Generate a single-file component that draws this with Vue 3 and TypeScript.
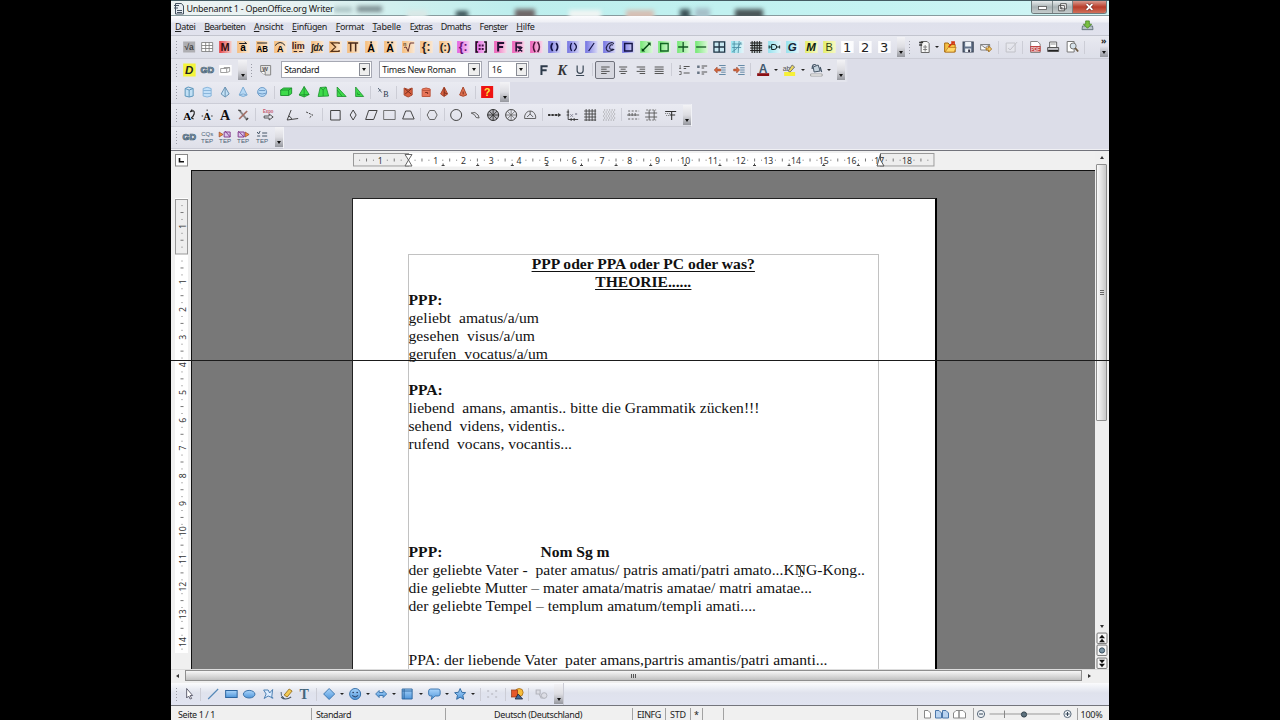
<script setup lang="ts">
import type { Directive } from 'vue'

// Spreads a label over the given number of pixels by adjusting its tracking.
const vFit: Directive<HTMLElement, number> = {
  mounted(el, { value }) {
    const natural = el.getBoundingClientRect().width
    const count = (el.textContent ?? '').length
    if (count > 0) el.style.letterSpacing = `${(value - natural) / count}px`
  },
}

const stroke = (d: string, c = '#333', w = 1, fill = 'none') =>
  `<path d="${d}" fill="${fill}" stroke="${c}" stroke-width="${w}"/>`
const glyph = (t: string, c = '#111', size = 12, extra = '') =>
  `<text x="8" y="${8 + size * 0.36}" font-size="${size}" text-anchor="middle" fill="${c}" ${extra}>${t}</text>`
const tile = (grad: string, body: string) =>
  `<rect x="2" y="2" width="12.5" height="12" fill="url(#${grad})"/>${body}`
const bold = 'font-weight="bold"'
const solid3d = (c: string, fill: string): Record<string, string> => ({
  box: stroke('M2.5 6L5.5 4H13.5V9.500L10.500 11.500H2.500Z M2.500 6H10.500V11.500 M10.500 6L13.500 4', c, 0.9, fill),
  pyramid: stroke('M8 2.500L3 11L8 13L13 10.500Z M8 2.500V13 M3 11L13 10.500', c, 0.8, fill),
  prism: stroke('M5 3.500L11 3L13.500 12L3 12.500Z M8 6L5 3.500 M8 6V12 M8 6L11 3', c, 0.8, fill),
  wedge: stroke('M4 3V12.500H13Z M4 6L9 12.500', c, 0.8, fill),
  wedge2: stroke('M4.500 3V12.500H12.500Z M6.500 8.500V10.500H9', c, 0.8, fill),
})
const g3 = solid3d('#1a8f2c', '#3edb4b')

const icons: Record<string, string> = {
  sqa: `<rect x="2" y="2.500" width="12" height="11" fill="#aeaeb2"/>` + glyph('√a', '#444', 8.5, bold),
  grid: stroke('M2.500 3.500H13.500V12.500H2.500ZM2.500 6.500H13.500M2.500 9.500H13.500M6.500 3.500V12.500M10 3.500V12.500', '#777', 0.8, '#fff'),
  M: tile('red', glyph('M', '#311', 11, bold)),
  vec: tile('org', `<text x="8" y="12.300" font-size="10" text-anchor="middle" font-weight="bold">a</text>` + stroke('M4 4.500H11.500L9.500 3', '#222')),
  ab: tile('org', `<text x="8" y="12.500" font-size="9.500" text-anchor="middle" textLength="11.500" lengthAdjust="spacingAndGlyphs" font-weight="bold">AB</text>` + stroke('M3 4H13', '#222')),
  hat: tile('org', `<text x="8" y="13" font-size="9" text-anchor="middle" font-weight="bold">A</text>` + stroke('M3 6.500Q8 .5 13 6.500', '#222')),
  lim: tile('org', `<text x="8" y="9.500" font-size="9" text-anchor="middle" font-weight="bold" fill="#422">lim</text>` + stroke('M3.500 12.500H7M9 12.500H12.500', '#322')),
  int: tile('org', glyph('∫dx', '#222', 10, 'font-style="italic" font-weight="bold" textLength="12" lengthAdjust="spacingAndGlyphs"')),
  sum: tile('org', stroke('M12 5V3.800H4L8.500 8L4 12.300H12V11', '#5a3418', 1.2)),
  prod: tile('org', stroke('M3 4H13M5.500 4V12.500M10.500 4V12.500', '#4a2a18', 1.5)),
  A1: tile('org', `<text x="8" y="13" font-size="10.500" text-anchor="middle" font-weight="bold">A</text>` + stroke('M8 2.500V4.500', '#222', 1.7)),
  A2: tile('org', `<text x="8" y="13" font-size="10.500" text-anchor="middle" font-weight="bold">A</text>` + stroke('M5 3.500H7M9 3.500H11', '#222', 1.6)),
  root: tile('org', stroke('M4 8.500L6 8L8 12.500L10 4H14', '#633') + `<text x="3" y="7" font-size="5.500">n</text>`),
  br1: tile('org', glyph('{:', '#222', 12, bold)),
  br2: tile('org', glyph('(:)', '#222', 11, bold)),
  br3: tile('mag', glyph('{:', '#617', 12, bold)),
  br4: tile('mag', stroke('M5 3H3V13H5M11 3H13V13H11', '#111', 1.5) + '<path d="M5.500 5.500h2v2h-2zM8.500 5.500h2v2h-2zM5.500 9h2v2h-2zM8.500 9h2v2h-2z" fill="#414"/>'),
  F1: tile('pnk', stroke('M12 4H6V12.500M6 8H11', '#213', 2)),
  F2: tile('pnk', stroke('M12 4H6V12.500M6 8H11M8 8L12 12.500M12 8L8 12.500', '#213', 1.6)),
  p1: tile('pnk', stroke('M7 3Q3.500 8 7 13M9.500 3Q13 8 9.500 13', '#4a1438', 1.5)),
  p2: tile('blu', stroke('M6.500 4Q3.500 8 6.500 12M10 4Q13 8 10 12', '#114', 1.7)),
  p3: tile('blu', stroke('M6.500 4Q4 8 6.500 12M9 4Q13.500 8 9 12', '#114', 1.3)),
  sl: tile('blu', stroke('M5.500 12L11 4', '#114', 1.2)),
  cc: tile('blu', stroke('M12.500 5Q12 3 9 4T5 9Q5.500 13 9 12T13 10M12 6Q9 5 8.500 8T12 10', '#224', 1.1)),
  sq: tile('blu', stroke('M4.500 4.500H12V12H4.500Z', '#114', 1.4)),
  gd: tile('grn', stroke('M4.500 11.500L11.500 4.500', '#041', 1.4) + '<path d="M12.500 3.500V7L9 3.500ZM3.500 12.500V9L7 12.500Z" fill="#041"/>'),
  gs: tile('grn', stroke('M4.500 4.500H12V12H4.500Z', '#162', 1.3)),
  gp: tile('grn', stroke('M3 8H13M8 3V13', '#152', 1.3)),
  gm: tile('grn', stroke('M3 8H13', '#152', 1.3)),
  tb: '<rect x="2" y="2" width="12.500" height="12" fill="#c8e8f2"/>' + stroke('M2.800 2.800H13.500V13.200H2.800ZM8 3V13.500M3 8H13.500', '#234', 1.3),
  cv: tile('cyn', stroke('M3 5H13M3 8.500H12M5 2V14M10 2L9 14M3 13Q9 10 12 3', '#468aa0', 0.8)),
  gg: `<rect x="3" y="3" width="11" height="11" fill="#b9c4c6"/>` + stroke('M2 4H14M2 6.500H14M2 9H14M2 11.500H14M4 2V14M6.500 2V14M9 2V14M11.500 2V14', '#222', 1),
  dd: tile('cyn', stroke('M3.500 8H5.500M10.500 8H13M3 6.500V9.500M13.500 6.500V9.500M5.500 5.500V10.500H8Q10.500 10.500 10.500 8T8 5.500Z', '#122', 1)),
  G: tile('cyn', glyph('G', '#123', 11.5, bold + ' font-style="italic"')),
  My: tile('yel', glyph('M', '#121', 11.5, bold + ' font-style="italic"')),
  By: tile('yel', glyph('B', '#341', 11)),
  n1: tile('wht', glyph('1', '#222', 13, 'font-family="DejaVu Sans"')),
  n2: tile('wht', glyph('2', '#222', 13, 'font-family="DejaVu Sans"')),
  n3: tile('wht', glyph('3', '#222', 13, 'font-family="DejaVu Sans"')),
  doc: stroke('M5 2.500H11L13 4.500V13.500H5Z', '#666', 1, '#f7f7f7') + stroke('M3 3.500H7M3 6H6', '#333', 1.5) + stroke('M7 8H11M7 10.500H11M9 6V12.500', '#777', 0.9),
  open: stroke('M2.500 13V4H6L7 5.500H13V13Z', '#a66a12', 1, '#f5bf43') + stroke('M6.500 8L11.500 3M9 3H12V6', '#d33512', 1.5) + stroke('M3 13L6 8.500H14L12 13Z', '#b9791b', 0.7, '#ffd86b'),
  save: stroke('M3 3H13V13H3Z', '#3a4556', 1.2, '#64748c') + '<path d="M5 3H11V7.500H5ZM5 9.500H11V13H5Z" fill="#eef2f7"/><rect x="8" y="10.500" width="2" height="2.500" fill="#334"/>',
  mail: stroke('M2.500 5.500H11.500V11H2.500ZM2.500 5.500L7 9L11.500 5.500', '#777', 0.9, '#fff') + stroke('M8 9H10.500V7L13.500 10L10.500 13V11H8Z', '#9a6412', 0.8, '#f6cd6a'),
  edit: `<g opacity=".35">` + stroke('M3 4H12V13H3ZM5 9L7 11L14 3', '#888', 1, '#eee') + '</g>',
  pdf: stroke('M3.500 2.500H10.500L13 5V13.500H3.500Z', '#888', 1, '#fff') + '<rect x="3" y="7" width="10.500" height="5.500" fill="#c04444"/><text x="8.300" y="11.500" font-size="4.500" fill="#fff" text-anchor="middle">PDF</text>',
  print: stroke('M4.500 8V3H11.500V8', '#666', 1, '#fff') + stroke('M5.500 5H10.500', '#777', 0.8) + stroke('M2.500 8.500H13.500V12.500H2.500Z', '#555', 1, '#c5c5ca') + stroke('M3 11.500H13', '#222', 1.2),
  look: stroke('M3 2.500H10V13H3Z', '#777', 1, '#fff') + '<circle cx="9" cy="7" r="3" fill="#d7e3ec" stroke="#777"/>' + stroke('M11 9L14 12.500', '#6b5a40', 1.8),
  D: `<rect x="2" y="1.500" width="12.500" height="13" fill="#f4f43c"/>` + glyph('D', '#222', 11.500, 'font-style="italic" font-weight="bold"'),
  GD: `<text x="8" y="11.200" font-size="9" text-anchor="middle" font-weight="bold" fill="#9fb4c2" stroke="#3d5a70" stroke-width=".7">GD</text>`,
  box0: '<rect x="2" y="3" width="12.500" height="10.500" fill="#fff"/>' + stroke('M3.500 6.500H9.500V10.500H3.500ZM9.500 6.500L12.500 5.500V9.500L9.500 10.500M7 6.500V5.500H12.500', '#888', 0.8),
  para: stroke('M3.500 3.500H13.500V13H8L3.500 9.500Z', '#888', 1, '#e4e4e4') + stroke('M3.500 9.500H8V13', '#777', 0.9, '#fff') + `<text x="5" y="8.500" font-size="6" font-weight="bold" fill="#555">W</text>`,
  F: stroke('M5.300 13V4.200H11.500M5.300 8.300H10.500', '#2c3a4a', 2),
  K: glyph('K', '#333', 14, 'font-style="italic" font-weight="bold" font-family="Liberation Serif"'),
  U: stroke('M5 3.500V8.500Q5 11.300 8 11.300T11 8.500V3.500', '#3b4856', 1.2) + stroke('M4 13.500H12', '#3b4856'),
  al: stroke('M4 5H12.500M4 7.200H9.500M4 9.400H12.500M4 11.500H9.500', '#555'),
  ac: stroke('M4 5H12M5.500 7.200H10.500M4 9.400H12M5.500 11.500H10.500', '#555'),
  ar: stroke('M3.500 5H12M6.500 7.200H12M3.500 9.400H12M6.500 11.500H12', '#555'),
  aj: stroke('M3.500 5H12.500M3.500 7.200H12.500M3.500 9.400H12.500M3.500 11.500H12.500', '#555'),
  ol: stroke('M7.500 4.500H13.500M7.500 6.500H10M7.500 11H13.500', '#555') + stroke('M4 3V6.500M3 6.500H5M3 9.500H5V12.500H3', '#555', 0.8),
  ul: stroke('M7.500 4H13M7.500 6H10M7.500 10H13M7.500 12H10', '#555') + '<path d="M3 3.500H5.500V6H3ZM3 9.500H5.500V12H3Z" fill="#667382"/>',
  out: stroke('M7 3.500H13.500M9 5.800H13.500M9 8H13.500M9 10.200H13.500M7 12.500H13.500', '#57809f', 0.9) + '<path d="M2 8L5 5V7H8.500V9H5V11Z" fill="#d0663e" stroke="#963f22" stroke-width=".5"/>',
  ind: stroke('M7 3.500H13.500M9 5.800H13.500M9 8H13.500M9 10.200H13.500M7 12.500H13.500', '#57809f', 0.9) + '<path d="M8.500 8L5.500 5V7H2.500V9H5.500V11Z" fill="#d0663e" stroke="#963f22" stroke-width=".5"/>',
  fc: `<text x="8" y="10.800" text-anchor="middle" font-size="12" font-weight="bold" fill="#3f586e">A</text><rect x="2" y="11.200" width="12" height="2.800" fill="#8a1015"/>`,
  hl: '<rect x="3" y="10" width="11" height="4" fill="#f6ef37"/>' + `<text x="1.500" y="8.500" font-size="7" fill="#555">ab</text>` + stroke('M7 9L11 3L13.500 5L9 10Z', '#777', 1, '#ead65b'),
  bk: stroke('M5 5L10 3L12 9L6 10Z', '#456', 1, '#c5d2dd') + stroke('M4 7Q4 1 8 3M12 5L13.500 10', '#456', 1.2) + '<path d="M2.500 12H14V14H2.500Z" fill="#fff" stroke="#777" stroke-width=".6"/>',
  b1: stroke('M4 4.500L8 6L12 4.500V12L8 13L4 12ZM8 6V13M4 4.500L7 3L12 4.500', '#5e97bd', 1, '#c2e0f5'),
  b2: stroke('M4 4.500Q8 2 12 4.500V12Q8 14 4 12ZM4 6.500H12M4 9.500H12', '#8ab6db', 1, '#c2e0f9'),
  b3: stroke('M8 3L4 10L8 13L12 10ZM8 3V13', '#6c94b4', 1, '#c5e1f5'),
  b4: stroke('M8 3L4 11Q8 14 12 11ZM4 11Q8 9 12 11', '#7fadd4', 1, '#b6d8f5'),
  b5: '<circle cx="8" cy="8" r="4.500" fill="#b6d8f5" stroke="#6f9dc9"/>' + stroke('M3.500 9Q8 11 12.500 9M5 6.500H11', '#6f9dc9'),
  c1: g3.box, c2: g3.pyramid, c3: g3.prism, c4: g3.wedge, c5: g3.wedge2,
  AB: `<text x="8" y="12.500" font-size="8" font-family="Liberation Serif" fill="#234">B</text>` + stroke('M3 4L6.500 8.500M3.500 7.500L5.500 5.500', '#456', 0.9),
  r1: stroke('M4 4L8 5.500L12 4V11L8 13L4 11Z', '#a9482e', 1, '#d8603f') + stroke('M5 5L11 10M11 5L5 10', '#7a2d1c'),
  r2: stroke('M4 5Q8 3 12 5V12.500H4ZM4 6.500H12', '#bd5840', 1, '#e8765a') + stroke('M7 8.500H9.500V10', '#7b2d1c'),
  r3: stroke('M8 3L4.500 10L8 12.500L11.500 10Z', '#a9482e', 1, '#d8603f') + stroke('M8 4V12M8 8.500L11 10', '#7a2d1c'),
  r4: stroke('M8 3L4.500 11Q8 13.500 11.500 11Z', '#a9482e', 1, '#e0704f') + stroke('M8 7.500V10.500', '#7a2d1c'),
  help: '<rect x="2" y="2" width="12" height="12" fill="#ee1212"/>' + glyph('?', '#ffe53d', 10.500, bold),
  t1: `<text x="2" y="12.500" font-size="11" font-family="Liberation Serif" font-weight="bold">A</text>` + stroke('M9 5Q14 2 13 7Q12 10 10 11M10 11L12.500 12M9 5L11 2.500', '#222', 1.2),
  t2: `<text x="8" y="12.500" font-size="10.500" text-anchor="middle" font-family="Liberation Serif" font-weight="bold">A</text>` + stroke('M2.500 9H4M12 9H13.500M8 2.500V4', '#333'),
  t3: glyph('A', '#111', 14, bold + ' font-family="Liberation Serif"'),
  t4: stroke('M4 3L12 13', '#888', 2) + stroke('M12 4L4 12', '#a36c62', 1.700) + stroke('M3 3L6 4M11 13L13 11', '#444', 1.2),
  exp: `<text x="8" y="6" text-anchor="middle" font-size="5.500" font-weight="bold" fill="#c4566a" textLength="10.500" lengthAdjust="spacingAndGlyphs">Expo</text>` + stroke('M4 9H9V7L13 10L9 13V11H4Z', '#444', 0.9),
  ang: stroke('M7 3L3 13L14 11.500M4.500 9Q7 10 7.500 12', '#333', 0.9),
  arc: stroke('M4 5L10.500 8L7 11', '#444', 1).replace('/>', ' stroke-dasharray="2 1"/>'),
  s1: stroke('M3.500 3.500H13V13H3.500Z', '#444'), s2: stroke('M8 3L11 8L8 13L5 8Z', '#444'),
  s3: stroke('M5.500 3.500H14L10.500 12.500H2.500Z', '#444'), s4: stroke('M2.500 3.500H14V12.500H2.500Z', '#666', 0.9),
  s5: stroke('M5.500 4H10.500L14 12H2.500Z', '#444'), hex: stroke('M5.500 3.500H10.500L13 8L10.500 12.500H5.500L3 8Z', '#666'),
  cir: '<circle cx="8" cy="8" r="5.500" fill="none" stroke="#444"/>',
  leaf: stroke('M4 6Q8 4 11 8L12 11L9 10.500Q8 7 4 6', '#555', 0.9),
  w1: '<circle cx="8" cy="8" r="5.500" fill="#b5b5bc" stroke="#333"/>' + stroke('M8 2V14M2 8H14M4 4L12 12M12 4L4 12', '#333', 0.9),
  w2: '<circle cx="8" cy="8" r="5.500" fill="none" stroke="#444"/>' + stroke('M8 2V14M2 8H14M4 4L12 12M12 4L4 12', '#666', 0.8),
  prot: stroke('M2.500 11.500V9Q4 4 8 4T13.500 9V11.500ZM5 10L8 7L11 10M8 4V7', '#555', 0.9),
  dots: stroke('M2 8H14', '#444', 0.8) + '<path d="M2 7h2v2h-2zM5.500 7h2v2h-2zM9 7h2v2h-2zM12 6L15 8L12 10Z" fill="#333"/>',
  axis: stroke('M4 2.500V12.500H14M2.500 5H5M2.500 8H5M7 11V14M10 11V14', '#333', 0.9) + stroke('M6 7L9 10M9 7L6 10M11 6L13 8M13 6L11 8', '#778', 0.7),
  mesh: stroke('M2 4H14M2 7H14M2 10H14M2 13H14M4 2V14M7 2V14M10 2V14M13 2V14', '#444', 0.9),
  mesh2: stroke('M3 3H14M2 5H13M3 7H14M2 9H13M3 11H14M2 13H13', '#888', 0.9).replace('/>', ' stroke-dasharray="1 1.500"/>'),
  x1: stroke('M2 8H14M4 6V9M7 6V9M10 6V9', '#555', 0.9) + stroke('M3 4H14M3 12H14', '#666').replace('/>', ' stroke-dasharray="2 1.500"/>'),
  x2: stroke('M2 6H14M2 10H14M6 3V13M11 3V13', '#555', 0.9) + stroke('M3 3H13M3 13H13', '#777').replace('/>', ' stroke-dasharray="2 1"/>'),
  x3: stroke('M3 4.500H14M9.500 4V13M7.500 8H13', '#333', 1.1) + stroke('M3 6.500H8M4 8.500H7', '#777').replace('/>', ' stroke-dasharray="1 1"/>'),
  tep1: `<text x="8" y="7" font-size="6" text-anchor="middle" fill="#4d6376">CQs</text><text x="8" y="14" font-size="6.200" text-anchor="middle" fill="#4d6376">TEP</text>`,
  tep2: '<path d="M2 3L6 5.500L2 8Z" fill="#ef913a" stroke="#8b3a2a" stroke-width=".6"/>' + stroke('M7 3H13V8H7ZM8 2L13 8', '#864090', 1, '#d9c6ea') + `<text x="8" y="14" font-size="6.200" text-anchor="middle" fill="#4d6376">TEP</text>`,
  tep3: '<path d="M10 3L14 5.500L10 8Z" fill="#ef913a" stroke="#8b3a2a" stroke-width=".6"/>' + stroke('M3 3H9V8H3ZM3 2L9 8', '#864090', 1, '#d9c6ea') + `<text x="8" y="14" font-size="6.200" text-anchor="middle" fill="#4d6376">TEP</text>`,
  tep4: stroke('M3 3L4.500 5L6 2M8 4H13M3 7H6M8 7H13', '#456') + `<text x="8" y="14" font-size="6.200" text-anchor="middle" fill="#4d6376">TEP</text>`,
  cur: stroke('M5.500 2.500V12L7.500 10L9 13L10.500 12.500L9 9.500H11.500Z', '#556', 0.9, '#fff'),
  line: stroke('M3 13L13 3', '#5588b8', 1.2),
  rc: '<rect x="2.500" y="4.500" width="11.500" height="7" fill="url(#shape)" stroke="#2d65a0"/>',
  el: '<ellipse cx="8" cy="8.200" rx="5.800" ry="3.800" fill="url(#shape)" stroke="#3c73aa"/>',
  poly: stroke('M4 12.500L6 8L3.500 4H8L9.500 7L12.500 3.500L11.500 12H13L8 10L4 12.500', '#4f82b5', 1, '#dcecff'),
  free: stroke('M3 6Q2 10 6 12', '#567', 1) + stroke('M6 9L11 3L14 5L9 11Z', '#9a7322', 0.9, '#f3c951') + stroke('M3 11Q7 15 13 11', '#456', 1.1),
  T: glyph('T', '#45667c', 14, bold + ' font-family="Liberation Serif"'),
  dia: stroke('M8 2.500L13.500 8L8 13.500L2.500 8Z', '#3570aa', 0.9, 'url(#shape)'),
  smi: '<circle cx="8" cy="8" r="5.500" fill="url(#shape)" stroke="#3570aa"/><circle cx="6" cy="6.500" r=".8" fill="#235"/><circle cx="10" cy="6.500" r=".8" fill="#235"/>' + stroke('M5 9.500Q8 12.500 11 9.500', '#235', 0.9),
  dbl: stroke('M2.500 8L6 4.500V6.500H10V4.500L13.500 8L10 11.500V9.500H6V11.500Z', '#3570aa', 0.9, 'url(#shape)'),
  flow: stroke('M3 3H13V13H3ZM5 3V13M3 5H13', '#28639d', 0.9, 'url(#shape)'),
  call: stroke('M4.500 3H12Q14 3 14 5V8Q14 10 12 10H9L5 13.500L6 10H4.500Q2.500 10 2.500 8V5Q2.500 3 4.500 3Z', '#3570aa', 0.9, 'url(#shape)'),
  star: stroke('M8 2.500L9.700 6.300L13.500 6.700L10.700 9.300L11.500 13.300L8 11.200L4.500 13.300L5.300 9.300L2.500 6.700L6.300 6.300Z', '#28639d', 0.9, 'url(#shape)'),
  pts: '<path d="M3 4H5V6H3ZM7 7H9V9H7ZM11 4H13V6H11ZM3 10H5V12H3ZM11 10H13V12H11Z" fill="#c7c9d2"/>',
  shp: '<circle cx="10" cy="6.500" r="4" fill="#f7bd3a" stroke="#a76a15" stroke-width=".8"/><rect x="2.500" y="4" width="6" height="7" fill="#e5582a" stroke="#8e3415" stroke-width=".7"/><path d="M9 8L13.500 13H6Z" fill="#3f6a9b" stroke="#223" stroke-width=".8"/>',
  ext: stroke('M3 4H7V8H3ZM6 8L8 12H12', '#b3b5bd', 1.1, '#dcdde5') + '<circle cx="11" cy="9.500" r="2.800" fill="#dcdde5" stroke="#b3b5bd"/>',
}

const line = (s: string) => s.split(' ')
const rowMath = line('sqa grid M vec ab hat lim int sum prod A1 A2 root br1 br2 br3 br4 F1 F2 p1 p2 p3 sl cc sq gd gs gp gm tb cv gg dd G My By n1 n2 n3')
const rowFile = line('doc v open save mail | edit | pdf print look |')
const rowStart = line('D GD box0')
const rowFormat = line('F K U | al* ac ar aj | ol ul out ind | fc v hl v bk v')
const row3d = line('b1 b2 b3 b4 b5 | c1 c2 c3 c4 c5 | AB | r1 r2 r3 r4 | help')
const rowGeo = line('t1 t2 t3 t4 | exp | ang arc | s1 s2 s3 s4 s5 | hex | cir leaf w1 w2 prot | dots axis mesh mesh2 | x1 x2 x3')
const rowTep = line('GD tep1 tep2 tep3 tep4')
const rowDraw = line('cur | line rc el poly free T | dia v smi v dbl v flow v call v star v | pts | shp | ext')

interface MenuEntry { a: string; k: string; b: string; w: number }
const menus: MenuEntry[] = [
  { a: '', k: 'D', b: 'atei', w: 20.5 }, { a: '', k: 'B', b: 'earbeiten', w: 41 },
  { a: '', k: 'A', b: 'nsicht', w: 29.5 }, { a: '', k: 'E', b: 'infügen', w: 35 },
  { a: '', k: 'F', b: 'ormat', w: 28 }, { a: '', k: 'T', b: 'abelle', w: 28.5 },
  { a: 'E', k: 'x', b: 'tras', w: 22.5 }, { a: 'Dmaths', k: '', b: '', w: 30 },
  { a: 'Fen', k: 's', b: 'ter', w: 28 }, { a: '', k: 'H', b: 'ilfe', w: 18.500 },
]

interface Para { t: string; w: number; cls?: string; more?: string; mw?: number }
const paras: Para[] = [
  { t: 'PPP oder PPA oder PC oder was?', w: 223, cls: 'head' },
  { t: 'THEORIE......', w: 96, cls: 'head' },
  { t: 'PPP:', w: 34, cls: 'strong' },
  { t: 'geliebt  amatus/a/um', w: 130.500 },
  { t: 'gesehen  visus/a/um', w: 126.500 },
  { t: 'gerufen  vocatus/a/um', w: 139.500 },
  { t: '', w: 0 },
  { t: 'PPA:', w: 34, cls: 'strong' },
  { t: 'liebend  amans, amantis.. bitte die Grammatik zücken!!!', w: 351 },
  { t: 'sehend  videns, videntis..', w: 156.500 },
  { t: 'rufend  vocans, vocantis...', w: 163.500 },
  { t: '', w: 0 }, { t: '', w: 0 }, { t: '', w: 0 }, { t: '', w: 0 }, { t: '', w: 0 },
  { t: 'PPP:', w: 34, cls: 'strong', more: 'Nom Sg m', mw: 69 },
  { t: 'der geliebte Vater -  pater amatus/ patris amati/patri amato...KNG-Kong..', w: 456.500 },
  { t: 'die geliebte Mutter – mater amata/matris amatae/ matri amatae...', w: 403.500 },
  { t: 'der geliebte Tempel – templum amatum/templi amati....', w: 347.500 },
  { t: '', w: 0 }, { t: '', w: 0 },
  { t: 'PPA: der liebende Vater  pater amans,partris amantis/patri amanti...', w: 419 },
]

const CM = 27.72
const hNums = [-1, ...Array.from({ length: 18 }, (_, i) => i + 1)]
const vNums = [-1, ...Array.from({ length: 14 }, (_, i) => i + 1)]
const ticks = (from: number, to: number) =>
  Array.from({ length: to - from + 1 }, (_, i) => from + i).filter((q) => q % 4 !== 0)
const hTicks = ticks(-7, 75)
const vTicks = ticks(-7, 57)
const tabs = Array.from({ length: 13 }, (_, i) => (i + 1) * 34.6)

const toolbars = [
  { id: 'solids', items: row3d },
  { id: 'geometry', items: rowGeo },
  { id: 'tep', items: rowTep },
]
</script>

<template>
  <div class="screen">
    <svg class="defs">
      <defs>
        <linearGradient id="red"><stop offset="0" stop-color="#e4444a" /><stop offset="1" stop-color="#f5cfc9" /></linearGradient>
        <linearGradient id="org"><stop offset="0" stop-color="#f6bd7c" /><stop offset="1" stop-color="#fae8d4" /></linearGradient>
        <linearGradient id="mag"><stop offset="0" stop-color="#e560e2" /><stop offset="1" stop-color="#f4cff2" /></linearGradient>
        <linearGradient id="pnk"><stop offset="0" stop-color="#ee5fb8" /><stop offset="1" stop-color="#f8d8ea" /></linearGradient>
        <linearGradient id="blu"><stop offset="0" stop-color="#7474e2" /><stop offset="1" stop-color="#dadaf6" /></linearGradient>
        <linearGradient id="grn"><stop offset="0" stop-color="#74e874" /><stop offset="1" stop-color="#dcf8da" /></linearGradient>
        <linearGradient id="cyn"><stop offset="0" stop-color="#92e2ee" /><stop offset="1" stop-color="#e4f5fa" /></linearGradient>
        <linearGradient id="yel"><stop offset="0" stop-color="#e4ee68" /><stop offset="1" stop-color="#f6f9c4" /></linearGradient>
        <linearGradient id="wht"><stop offset="0" stop-color="#fff" /><stop offset="1" stop-color="#fbfbfd" /></linearGradient>
        <linearGradient id="shape" x2="0" y2="1"><stop offset="0" stop-color="#a9d4fb" /><stop offset="1" stop-color="#5096da" /></linearGradient>
      </defs>
    </svg>

    <div class="window">
      <header class="title">
        <svg class="app" viewBox="0 0 12 13"><path d="M2.500 1.500H8.500L10.500 4V12H2.500Z" fill="#e8edf2" stroke="#445260" /><path d="M1 3.500H6M1 6H5M4 8.500H9M4 10.500H9" stroke="#445260" /></svg>
        <span v-fit="147">Unbenannt 1 - OpenOffice.org Writer</span>
        <svg class="glass" viewBox="0 0 560 15">
          <g class="smear">
            <rect x="0" y="6" width="18" height="5" fill="#a7bfc0" /><rect x="23" y="5" width="25" height="6" fill="#7c8e91" />
            <rect x="73" y="9" width="20" height="8" fill="#d9e8e6" />
            <rect x="122" y="10" width="12" height="6" fill="#33494d" />
            <rect x="181" y="8" width="20" height="10" fill="#6e6667" />
            <rect x="235" y="9" width="32" height="8" fill="#f1f5f3" />
            <rect x="292" y="9" width="28" height="9" fill="#d6bfb4" />
            <rect x="346" y="8" width="10" height="10" fill="#3d5358" /><rect x="361" y="7" width="15" height="10" fill="#a5c0c9" />
            <rect x="401" y="8" width="28" height="10" fill="#4a5658" />
          </g>
        </svg>
        <div class="controls">
          <i class="min"><svg viewBox="0 0 20 12"><rect x="6.500" y="5.500" width="8" height="3" fill="#fff" stroke="#555" stroke-width=".8" /></svg></i>
          <i class="max"><svg viewBox="0 0 20 12"><path d="M8 2.500H14V8H8ZM6 4.500H12V10H6Z" fill="#fff" stroke="#444" stroke-width=".9" /><rect x="8" y="6.200" width="2" height="2" fill="#666" /></svg></i>
          <i class="close"><svg viewBox="0 0 34 12"><path d="M14 3L20 9M20 3L14 9" stroke="#6b2a24" stroke-width="3.200" /><path d="M14 3L20 9M20 3L14 9" stroke="#fff" stroke-width="2" /></svg></i>
        </div>
      </header>

      <nav class="menu">
        <span v-for="m in menus" :key="m.a + m.k + m.b" v-fit="m.w">{{ m.a }}<u>{{ m.k }}</u>{{ m.b }}</span>
        <svg class="update" viewBox="0 0 14 12"><path d="M1.500 6.500L1 10.500H13L12.500 6.500Z" fill="#b7c2c8" stroke="#61717a" /><path d="M5 1H9V4.500H11.500L7 9L2.500 4.500H5Z" fill="#79c142" stroke="#3f7d1c" stroke-width=".8" /></svg>
      </nav>

      <section class="row first">
        <i class="grip" />
        <svg v-for="n in rowMath" :key="n" class="tool" viewBox="0 0 16 16" v-html="icons[n]" />
        <i class="cap wide-gap" /><i class="grip second" />
        <template v-for="(n, i) in rowFile" :key="i">
          <i v-if="n === '|'" class="sep" /><i v-else-if="n === 'v'" class="drop" />
          <svg v-else class="tool" viewBox="0 0 16 16" v-html="icons[n]" />
        </template>
        <i class="cap more"><b>»</b></i>
      </section>

      <section class="row format">
        <i class="grip" />
        <svg v-for="n in rowStart" :key="n" class="tool" viewBox="0 0 16 16" v-html="icons[n]" />
        <i class="cap" /><i class="grip second" />
        <svg class="tool style-icon" viewBox="0 0 16 16" v-html="icons.para" />
        <div class="combo style"><span v-fit="35">Standard</span><i /></div>
        <div class="combo family"><span v-fit="73.500">Times New Roman</span><i /></div>
        <div class="combo size"><span v-fit="10">16</span><i /></div>
        <template v-for="(n, i) in rowFormat" :key="i">
          <i v-if="n === '|'" class="sep" /><i v-else-if="n === 'v'" class="drop" />
          <svg v-else class="tool" :class="{ pressed: n.endsWith('*') }" viewBox="0 0 16 16" v-html="icons[n.replace('*', '')]" />
        </template>
        <i class="cap" />
      </section>

      <section v-for="bar in toolbars" :key="bar.id" class="row" :class="bar.id">
        <div class="strip">
          <i class="grip" />
          <template v-for="(n, i) in bar.items" :key="i">
            <i v-if="n === '|'" class="sep" />
            <svg v-else class="tool" viewBox="0 0 16 16" v-html="icons[n]" />
          </template>
          <i class="cap" />
        </div>
      </section>

      <main class="editor">
        <svg class="hruler" viewBox="171 151 938 19">
          <rect x="175.500" y="154.500" width="12" height="11.500" fill="#fff" stroke="#888" /><path d="M179.500 158V161.800H184" stroke="#111" stroke-width="1.600" fill="none" />
          <rect x="353" y="153" width="581.500" height="13.500" fill="#fff" />
          <rect x="353.500" y="153.500" width="55" height="12.500" fill="#eee" stroke="#999" />
          <rect x="880.500" y="153.500" width="53.500" height="12.500" fill="#eee" stroke="#999" />
          <text v-for="n in hNums" :key="n" :x="408 + n * CM" y="163.600" text-anchor="middle">{{ Math.abs(n) }}</text>
          <template v-for="q in hTicks" :key="q">
            <rect v-if="408 + q * CM / 4 < 932" :x="407.600 + q * CM / 4" :y="q % 2 ? 159.700 : 158.500" width="1" :height="q % 2 ? 1 : 3" fill="#777" />
          </template>
          <path v-for="t in tabs" :key="t" :d="`M${407 + t} 165.500h3M${408.500 + t} 163.500v2`" stroke="#444" />
          <path d="M405 154.500H412L408.500 160ZM408.500 160L412 166H405Z" fill="#fff" stroke="#666" />
          <path d="M880.500 154V160L884 166H877Z" fill="#fff" stroke="#555" />
        </svg>
        <div class="work">
          <svg class="vruler" viewBox="171 170 20 499">
            <rect x="175" y="198" width="13" height="455" fill="#fff" />
            <rect x="175.500" y="199.500" width="12" height="54.500" fill="#eee" stroke="#999" />
            <text v-for="n in vNums" :key="n" text-anchor="middle" :transform="`translate(186 ${254 + n * CM}) rotate(-90)`">{{ Math.abs(n) }}</text>
            <template v-for="q in vTicks" :key="q">
              <rect v-if="254 + q * CM / 4 < 652" :x="q % 2 ? 181.500 : 180.500" :y="253.600 + q * CM / 4" :width="q % 2 ? 1 : 3" height="1" fill="#777" />
            </template>
          </svg>
          <div class="canvas">
            <article class="page">
              <div class="text">
                <p v-for="(p, i) in paras" :key="i" :class="p.cls"><span v-fit="p.w">{{ p.t }}</span><span v-if="p.more" v-fit="p.mw ?? 0" class="more-text">{{ p.more }}</span></p>
              </div>
            </article>
          </div>
          <aside class="vscroll">
            <i class="tri up" /><div class="vthumb"><i /></div><span class="vspace" /><i class="tri down" />
            <svg v-for="k in 3" :key="k" class="jump" viewBox="0 0 12 12">
              <rect x="1" y=".8" width="10" height="10.400" rx="1" fill="#f7f7f7" stroke="#777" />
              <path v-if="k === 1" d="M3 6L6 2.500L9 6ZM3 10L6 6.500L9 10Z" fill="#111" />
              <circle v-else-if="k === 2" cx="6" cy="6.200" r="2.600" fill="#7c95a5" stroke="#395060" />
              <path v-else d="M3 2.500L6 6L9 2.500ZM3 6.500L6 10L9 6.500Z" fill="#111" />
            </svg>
          </aside>
        </div>
      </main>

      <div class="hscroll"><i class="tri left" /><div class="hthumb"><i /></div><i class="tri right" /></div>

      <section class="row draw">
        <div class="strip">
          <i class="grip" />
          <template v-for="(n, i) in rowDraw" :key="i">
            <i v-if="n === '|'" class="sep" /><i v-else-if="n === 'v'" class="drop" />
            <svg v-else class="tool" viewBox="0 0 16 16" v-html="icons[n]" />
          </template>
          <i class="cap" />
        </div>
      </section>

      <footer class="status">
        <div class="pg"><span v-fit="37">Seite 1 / 1</span></div>
        <div class="tpl"><span v-fit="35">Standard</span></div>
        <div class="lang"><span v-fit="88">Deutsch (Deutschland)</span></div>
        <div class="ins"><span v-fit="24">EINFG</span></div>
        <div class="std"><span v-fit="16">STD</span></div>
        <div class="mod">*</div>
        <div class="sig" />
        <div class="fill" />
        <div class="views">
          <svg viewBox="0 0 48 12"><path d="M2.500 2.500H6L8.500 5V10H2.500Z" fill="#fff" stroke="#888" /><path d="M13.500 2.500H17L19.500 5V10H13.500ZM20.500 2.500H24L26.500 5V10H20.500Z" fill="#b9d3f0" stroke="#4b76a9" /><path d="M31.500 10V5L34 2.500H37V10ZM37 2.500H41L43.500 5V10H37Z" fill="#fff" stroke="#888" /></svg>
        </div>
        <div class="zoom">
          <svg viewBox="0 0 102 14"><g fill="#eef2f6" stroke="#5b6b7c"><circle cx="7" cy="7" r="3.600" /><circle cx="93.500" cy="7" r="3.600" /></g><path d="M5 7H9M91.500 7H95.500M93.500 5V9" stroke="#345" /><path d="M15.500 7H86" stroke="#999" /><path d="M30.500 3.500V11" stroke="#888" /><circle cx="50" cy="7.500" r="2.600" fill="#5d717e" stroke="#34444f" /></svg>
        </div>
        <div class="pct"><span v-fit="22">100%</span></div>
      </footer>
      <div class="scanline" />
      <svg class="ibeam" viewBox="0 0 7 12"><path d="M1 .5H3L3.500 1L4 .5H6M3.500 1V11M1 11.500H3L3.500 11L4 11.500H6" fill="none" stroke="#333" stroke-width=".8" /></svg>
    </div>
  </div>
</template>

<style>
html, body { background: #000; overflow: hidden; }
</style>
<style scoped>
.screen { width: 1280px; height: 720px; background: #000; display: flex; justify-content: center; font-family: "Noto Sans", "Open Sans", sans-serif; font-size: 9px; color: #222; overflow: hidden; }
.screen * { box-sizing: border-box; }
.defs { position: absolute; width: 0; height: 0; }
.window { position: relative; width: 938px; height: 720px; display: flex; flex-direction: column; background: #dfe0ea; overflow: hidden; white-space: pre; }
svg { display: block; flex: none; }
span { white-space: pre; flex: none; }

.title { height: 16px; flex: none; border-top: 1px solid #445b62; border-bottom: 1px solid #879b9e; background: linear-gradient(90deg, #eef3f3 0, #e5f1f1 130px, #d1f0ef 220px, #bdeeed 340px, #c4f3f2 700px, #d2f5f5); display: flex; align-items: center; padding: 0 0 0 2px; }
.app { width: 12px; height: 13px; margin-right: 1.500px; }
.glass { width: 560px; height: 15px; overflow: hidden; }
.smear { filter: blur(2px); }
.controls { margin-left: auto; margin-right: 2px; align-self: flex-start; display: flex; height: 12.500px; border: 1px solid #6d7a7c; border-top: 0; border-radius: 0 0 3px 3px; overflow: hidden; }
.controls i { height: 12px; background: linear-gradient(#e8edee, #a9b3b5 50%, #c5cccc); border-right: 1px solid #7c8788; }
.controls .min { width: 21px; } .controls .max { width: 20px; }
.controls .close { width: 33px; border: 0; background: linear-gradient(#d99b8f, #b93d2a 50%, #d0715b); }
.controls svg { width: 100%; height: 12px; }

.menu { height: 20px; flex: none; display: flex; align-items: center; gap: 8.700px; padding: 1px 0 0 4px; background: linear-gradient(#fdfdfe, #eff0f6 30%, #dfe1ec 38%, #e1e2ed); border-bottom: 1px solid #c3c5cf; }
.menu u { text-underline-offset: 1px; }
.update { width: 13px; height: 11px; margin: 0 15px 1px auto; }

.row { height: 22.700px; flex: none; display: flex; align-items: center; padding-left: 3.500px; background: #dcdde8; }
.first { height: 23px; background: linear-gradient(#e9eaf1, #e2e3ec 50%, #dddfe9); border-bottom: 1px solid #cccdd7; }
.strip { height: 100%; display: flex; align-items: center; background: linear-gradient(#eaebf2, #dfe0e9); border-right: 1px solid #f1f2f6; border-bottom: 1px solid #cccdd7; margin-left: -3.500px; padding-left: 3.500px; }
.format { height: 22.500px; padding-bottom: 1px; background: linear-gradient(90deg, #e4e5ed 675px, #dcdde8 677px); }
.solids { height: 22.500px; } .geometry { height: 22.500px; }
.tep { height: 23.500px; border-bottom: 1px solid #f0f0f4; }
.tool { width: 18.300px; height: 16px; font-family: "Liberation Sans", sans-serif; }
.grip { width: 5px; height: 14px; flex: none; background: radial-gradient(circle, #9a9ba6 0.700px, transparent 1px) 0 0 / 3px 3px repeat-y; }
.sep { width: 6px; height: 13px; flex: none; background: linear-gradient(90deg, transparent 2.500px, #cccdd6 2.500px, #cccdd6 3.500px, transparent 3.500px); }
.drop { width: 8px; flex: none; display: flex; justify-content: center; }
.drop::before { content: ""; border: 2px solid transparent; border-top: 2.500px solid #222; border-bottom: 0; }
.cap { width: 8.500px; height: 20px; flex: none; margin-left: 4px; background: linear-gradient(#f3f3f6, #dddde2 50%, #96989f); display: flex; align-items: flex-end; justify-content: center; padding-bottom: 3px; font-style: normal; }
.cap::after { content: ""; border: 2.500px solid transparent; border-top: 3px solid #111; border-bottom: 0; }
.wide-gap { margin-left: 3.500px; }
.second { margin-left: 3px; }
.first .second { margin-right: 1.500px; }
.more { margin-left: auto; margin-right: 1px; flex-direction: column; align-items: center; justify-content: space-between; background: linear-gradient(#e4e5ed 45%, #96989f); }
.more b { font-size: 9px; line-height: 8px; }
.style-icon { margin: 0 6px 0 1.500px; }
.combo { height: 17px; border: 1px solid #a6a8b3; background: #fff; display: flex; align-items: center; justify-content: space-between; padding: 1px 1px 1px 2.500px; margin-right: 6.500px; flex: none; }
.combo i { width: 11.500px; height: 13px; border: 1px solid #888b94; background: #eee; display: flex; align-items: center; justify-content: center; }
.combo i::before { content: ""; border: 2.500px solid transparent; border-top: 3px solid #111; border-bottom: 0; }
.style { width: 91.500px; } .family { width: 103px; } .size { width: 41px; margin-right: 5.500px; }
.pressed { outline: 1px solid #70727c; background: #d6d7df; border-radius: 1px; }

.editor { flex: 1; min-height: 0; display: flex; flex-direction: column; background: #f0f0f0; border-top: 1px solid #73747c; }
.hruler { width: 938px; height: 19px; }
.hruler text, .vruler text { font: 8.700px "Noto Sans", sans-serif; fill: #333; }
.work { flex: 1; min-height: 0; display: flex; }
.vruler { width: 20px; height: 499px; }
.canvas { flex: 1; background: #787878; border-left: 1px solid #111; border-top: 1px solid #111; overflow: hidden; padding: 27px 0 0 160px; }
.page { width: 585px; height: 520px; background: #fff; border: 1px solid #222; border-right: 2.500px solid #000; padding: 55px 0 0 55px; }
.text { width: 471px; height: 480px; border: 1px solid #c2c2c2; border-bottom: 0; }
.text p { margin: 0 0 0 -0.500px; height: 18px; line-height: 18px; font-family: "Liberation Serif", serif; font-size: 15.600px; color: #111; display: flex; }
.text .head { justify-content: center; font-weight: bold; text-decoration: underline; text-underline-offset: 2px; }
.text .head span { text-decoration: underline; text-decoration-thickness: 1px; }
.text .strong { font-weight: bold; }
.more-text { margin-left: 98px; }
.vscroll { width: 14px; flex: none; display: flex; flex-direction: column; align-items: center; background: #efefef; margin-top: -19px; padding: 5px 1px 0 0; }
.tri { flex: none; border: 2.500px solid transparent; }
.tri.up { border-bottom: 3px solid #333; border-top: 0; margin: 0 0 5px; }
.tri.down { border-top: 3px solid #333; border-bottom: 0; margin-bottom: 4px; }
.vthumb { width: 11px; height: 256.500px; flex: none; border: 1px solid #8e8e8e; border-radius: 1px; background: linear-gradient(90deg, #fafafa, #e2e2e2 50%, #c9c9c9); display: flex; align-items: center; justify-content: center; }
.vthumb i { width: 4px; height: 5px; background: repeating-linear-gradient(#666 0 1px, transparent 1px 2px); }
.vspace { flex: 1; }
.jump { width: 12px; height: 12.500px; }
.hscroll { height: 14px; flex: none; display: flex; align-items: center; background: #efefef; padding: 0 0 2px 5px; border-top: 1px solid #ddd; }
.tri.left { border-right: 3px solid #333; border-left: 0; }
.tri.right { border-left: 3px solid #333; border-right: 0; }
.hthumb { width: 897px; height: 10.500px; margin: 0 6px; border: 1px solid #8e8e8e; background: linear-gradient(#f6f6f6, #dcdcdc 50%, #c0c0c0); display: flex; align-items: center; justify-content: center; }
.hthumb i { width: 5px; height: 4px; background: repeating-linear-gradient(90deg, #555 0 1px, transparent 1px 2px); }
.draw { height: 22px; background: linear-gradient(#fbfbfd, #eef0f6 20%, #dfe2ed 45%, #e1e4f1); }
.draw .strip { background: none; border-bottom: 0; border-right: 1px solid #cbccd5; }
.status { height: 15px; flex: none; background: #f0f0f0; border-top: 1px solid #74767d; display: flex; align-items: center; padding-top: 2px; }
.status > div { height: 12px; flex: none; display: flex; align-items: center; border-right: 1px solid #a2a2a2; padding-left: 4px; overflow: hidden; }
.status .pg { width: 141px; padding-left: 7px; } .status .tpl { width: 134px; }
.status .lang { width: 187px; padding-left: 48px; } .status .ins { width: 33px; }
.status .std { width: 25px; } .status .mod { width: 12px; padding-left: 3px; }
.status .sig { width: 21px; } .status .fill { flex: 1; }
.status .views { width: 56px; } .views svg { width: 48px; height: 12px; }
.status .zoom { width: 104px; padding: 0; } .zoom svg { width: 102px; height: 14px; }
.status .pct { width: 31.500px; border: 0; padding-left: 3px; }
.scanline { position: absolute; left: 0; top: 360px; width: 938px; height: 1px; background: #1b1b1b; }
.ibeam { position: absolute; left: 626px; top: 565px; width: 7px; height: 12px; }
</style>
